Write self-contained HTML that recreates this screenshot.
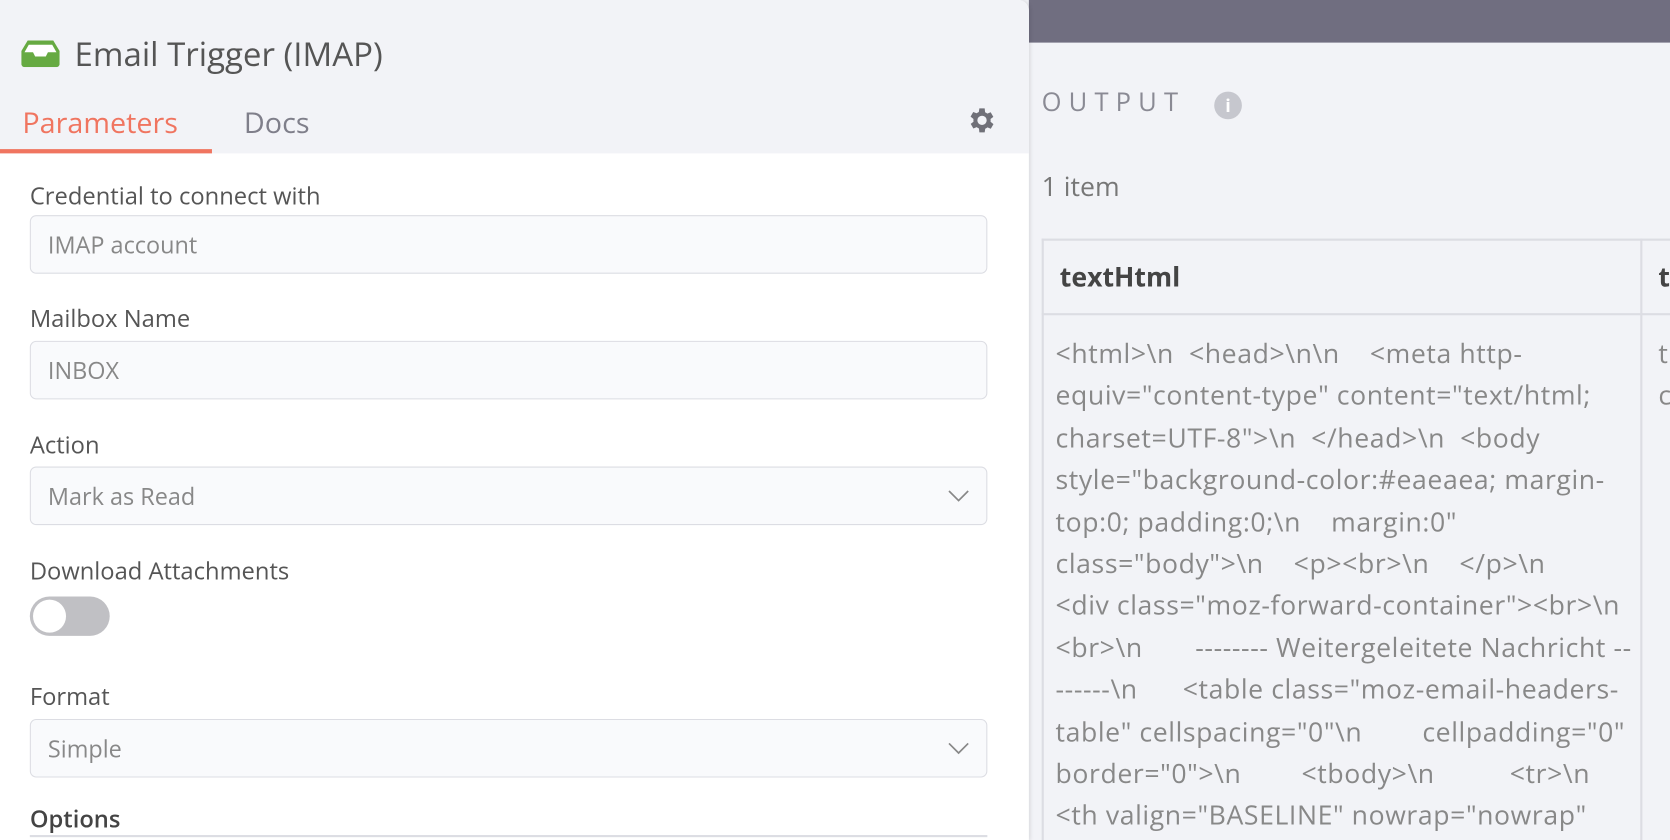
<!DOCTYPE html>
<html><head><meta charset="utf-8"><style>
html,body{margin:0;padding:0;width:1670px;height:840px;overflow:hidden;background:#f2f3f7;font-family:"Open Sans","Liberation Sans",sans-serif;}
#clip{position:relative;width:1670px;height:840px;overflow:hidden;}
#w{position:absolute;left:0;top:0;width:1568px;height:790px;transform:scale(1.0651);transform-origin:0 0;}
.a{position:absolute;white-space:nowrap;}
.lbl{position:absolute;left:28px;font-size:22.3px;color:#555;}
.inp{position:absolute;left:28px;width:899px;height:55px;background:#f9fafc;border:1.5px solid #dcdde3;border-radius:6px;box-sizing:border-box;}
.inp span{position:absolute;left:16px;top:12px;font-size:22px;color:#888;}
.inp svg{position:absolute;right:16px;top:19px;}
.row{font-size:25px;letter-spacing:0.55px;color:#888;line-height:39.4px;}
</style></head><body><div id="clip"><div id="w">
<div class="a" style="left:966px;top:0;width:602px;height:40px;background:#706e80"></div>
<div class="a" style="left:0;top:0;width:966px;height:789px;background:#fff;border-top-right-radius:10px;box-shadow:1px 0 4px rgba(0,0,0,.12)"></div>
<div class="a" style="left:0;top:0;width:966px;height:144px;background:#f2f3f7;border-top-right-radius:10px"></div>
<svg class="a" style="left:20px;top:38px" width="36" height="25" viewBox="0 0 36 25"><path d="M6 0h24l6 10v12a3 3 0 0 1-3 3H3a3 3 0 0 1-3-3V10z" fill="#66aa42"/><path d="M7 4h22l4 7h-8l-2 4H13l-2-4H3z" fill="#fff"/></svg>
<div class="a" style="left:70px;top:30px;font-size:31px;color:#555">Email Trigger (IMAP)</div>
<div class="a" style="left:21px;top:96px;font-size:27px;color:#f07560">Parameters</div>
<div class="a" style="left:0;top:140px;width:199px;height:4px;background:#f07560"></div>
<div class="a" style="left:229px;top:96px;font-size:27px;color:#7f7f8a">Docs</div>
<svg class="a" style="left:907px;top:98px" width="30" height="30" viewBox="0 0 24 24"><path fill="#707078" d="M19.4 13a7.5 7.5 0 0 0 0-2l2.1-1.6-2-3.5-2.5 1a7 7 0 0 0-1.7-1L15 3h-4l-.4 2.7a7 7 0 0 0-1.7 1l-2.5-1-2 3.5L6.6 11a7.5 7.5 0 0 0 0 2l-2.1 1.6 2 3.5 2.5-1a7 7 0 0 0 1.7 1L11 21h4l.4-2.7a7 7 0 0 0 1.7-1l2.5 1 2-3.5zM13 15.5a3.5 3.5 0 1 1 0-7 3.5 3.5 0 0 1 0 7z" transform="translate(-1 0)"/></svg>
<div class="lbl" style="top:168px">Credential to connect with</div>
<div class="inp" style="top:202px"><span>IMAP account</span></div>
<div class="lbl" style="top:283px">Mailbox Name</div>
<div class="inp" style="top:320px"><span>INBOX</span></div>
<div class="lbl" style="top:402px">Action</div>
<div class="inp" style="top:438px"><span>Mark as Read</span><svg width="20" height="14" viewBox="0 0 20 14"><path d="M1 3l9 9 9-9" stroke="#888" stroke-width="1.6" fill="none"/></svg></div>
<div class="lbl" style="top:520px">Download Attachments</div>
<div class="a" style="left:28px;top:560px;width:75px;height:37px;border-radius:19px;background:#c0c0c4"></div>
<div class="a" style="left:31px;top:563px;width:31px;height:31px;border-radius:50%;background:#fff"></div>
<div class="lbl" style="top:638px">Format</div>
<div class="inp" style="top:675px"><span>Simple</span><svg width="20" height="14" viewBox="0 0 20 14"><path d="M1 3l9 9 9-9" stroke="#888" stroke-width="1.6" fill="none"/></svg></div>
<div class="lbl" style="top:753px;color:#444;font-weight:600">Options</div>
<div class="a" style="left:28px;top:784px;width:899px;height:2px;background:#dcdde3"></div>

<div class="a" style="left:978px;top:79px;font-size:24px;color:#8a8a94;letter-spacing:6.7px">OUTPUT</div>
<div class="a" style="left:1140px;top:86px;width:26px;height:26px;border-radius:50%;background:#c6c7ce;color:#fff;font-size:17px;font-weight:bold;text-align:center;line-height:26px">i</div>
<div class="a" style="left:978px;top:158px;font-size:25px;color:#777">1 item</div>
<div class="a" style="left:978px;top:224px;width:600px;height:566px;border:2px solid #dcdde3;border-bottom:none;box-sizing:border-box"></div>
<div class="a" style="left:978px;top:294px;width:600px;height:2px;background:#dcdde3"></div>
<div class="a" style="left:1540px;top:224px;width:2px;height:566px;background:#dcdde3"></div>
<div class="a" style="left:995px;top:243px;font-size:25px;font-weight:bold;color:#444">textHtml</div>
<div class="a" style="left:1557px;top:243px;font-size:25px;font-weight:bold;color:#444">t</div>
<div class="a row" style="left:1557px;top:313px">t<br>c</div>
<div class="a row" style="left:991px;top:313px;white-space:pre">&lt;html&gt;\n  &lt;head&gt;\n\n    &lt;meta http-
equiv="content-type" content="text/html;
charset=UTF-8"&gt;\n  &lt;/head&gt;\n  &lt;body
style="background-color:#eaeaea; margin-
top:0; padding:0;\n    margin:0"
class="body"&gt;\n    &lt;p&gt;&lt;br&gt;\n    &lt;/p&gt;\n
&lt;div class="moz-forward-container"&gt;&lt;br&gt;\n
&lt;br&gt;\n       -------- Weitergeleitete Nachricht --
------\n      &lt;table class="moz-email-headers-
table" cellspacing="0"\n        cellpadding="0"
border="0"&gt;\n        &lt;tbody&gt;\n          &lt;tr&gt;\n
&lt;th valign="BASELINE" nowrap="nowrap"</div>
</div></div></body></html>
